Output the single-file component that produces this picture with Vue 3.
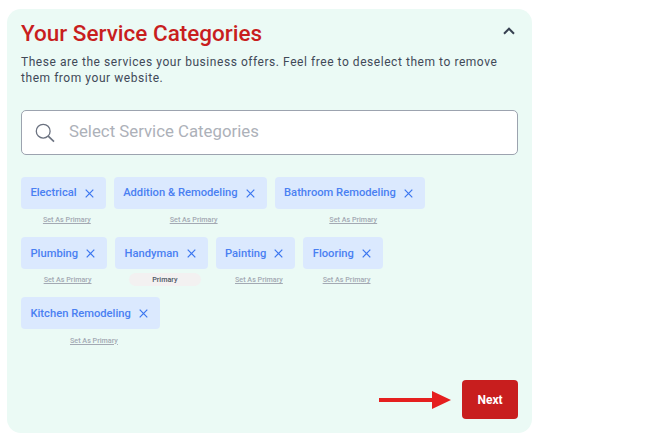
<script setup>
const rows = [
  [
    { name: 'Electrical' },
    { name: 'Addition & Remodeling' },
    { name: 'Bathroom Remodeling' },
  ],
  [
    { name: 'Plumbing' },
    { name: 'Handyman', primary: true },
    { name: 'Painting' },
    { name: 'Flooring' },
  ],
  [{ name: 'Kitchen Remodeling' }],
]
</script>

<template>
  <div class="page">
    <section class="card">
      <header class="head">
        <h1 class="title">Your Service Categories</h1>
        <svg class="chev" width="12" height="8" viewBox="0 0 12 8">
          <path d="M1 6.7 L6 1.7 L11 6.7" fill="none" stroke="#374151" stroke-width="2" />
        </svg>
      </header>
      <p class="desc">These are the services your business offers. Feel free to deselect them to remove them from your website.</p>
      <div class="search">
        <svg class="glass" width="20" height="20" viewBox="0 0 20 20">
          <circle cx="8.2" cy="8.2" r="6.9" fill="none" stroke="#6b7280" stroke-width="1.3" />
          <path d="M13.2 13.2 L19 18.6" fill="none" stroke="#6b7280" stroke-width="1.7" />
        </svg>
        <span class="placeholder">Select Service Categories</span>
      </div>
      <div class="rows">
        <div v-for="(row, i) in rows" :key="i" class="row">
          <div v-for="c in row" :key="c.name" class="item">
            <div class="chip">
              <span class="chip-name">{{ c.name }}</span>
              <svg class="x" width="9" height="9" viewBox="0 0 9 9">
                <path d="M.7 .7 L8.3 8.3 M8.3 .7 L.7 8.3" fill="none" stroke="#3b76f0" stroke-width="1.2" />
              </svg>
            </div>
            <span v-if="c.primary" class="primary">Primary</span>
            <a v-else class="set">Set As Primary</a>
          </div>
        </div>
      </div>
      <footer class="foot">
        <svg class="arrow" width="72" height="18" viewBox="0 0 72 18">
          <path d="M0 7 H53 V0 L72 9 L53 18 V11 H0 Z" fill="#e51f1f" />
        </svg>
        <button class="next">Next</button>
      </footer>
    </section>
  </div>
</template>

<style scoped>
.page {
  width: 665px;
  height: 436px;
  box-sizing: border-box;
  padding: 9px 0 3px 7px;
  background: #fff;
  font-family: Roboto, "Liberation Sans", sans-serif;
}
.card {
  width: 525px;
  height: 424px;
  box-sizing: border-box;
  padding: 10px 14px 14px;
  background: #ebfaf5;
  border-radius: 14px;
  display: flex;
  flex-direction: column;
}
.head {
  display: flex;
  align-items: center;
  justify-content: space-between;
  height: 28px;
}
.title {
  margin: 0;
  font-size: 22.5px;
  line-height: 28px;
  font-weight: 500;
  color: #c81e1e;
}
.chev {
  margin-right: 3px;
  margin-top: -4px;
}
.desc {
  margin: 7px 0 0;
  width: 490px;
  font-size: 12px;
  line-height: 16px;
  letter-spacing: .55px;
  color: #414958;
}
.search {
  margin-top: 24px;
  height: 45px;
  box-sizing: border-box;
  display: flex;
  align-items: center;
  padding-left: 13px;
  background: #fff;
  border: 1px solid #9ca3af;
  border-radius: 5px;
}
.glass {
  flex: none;
}
.placeholder {
  margin-left: 14px;
  padding-bottom: 3px;
  font-size: 16.8px;
  color: #adb1b9;
}
.rows {
  margin-top: 21.7px;
  display: flex;
  flex-direction: column;
  gap: 8px;
}
.row {
  display: flex;
  gap: 8px;
}
.item {
  display: flex;
  flex-direction: column;
  align-items: center;
  height: 52.2px;
}
.chip {
  height: 32px;
  box-sizing: border-box;
  display: flex;
  align-items: center;
  gap: 8px;
  padding: 0 12px 0 9.45px;
  background: #dbe9fe;
  border-radius: 4px;
}
.chip-name {
  padding-top: .4px;
  font-size: 11.2px;
  font-weight: 500;
  color: #4a80f2;
}
.x {
  margin-top: 1px;
}
.set {
  margin-top: 6.5px;
  margin-left: 7px;
  font-size: 7.2px;
  line-height: 9px;
  font-weight: 500;
  color: #a3a9b3;
  text-decoration: underline;
}
.primary {
  margin-top: 4px;
  margin-left: 7px;
  width: 72px;
  height: 13px;
  line-height: 13px;
  text-align: center;
  border-radius: 7px;
  background: #f3f1f1;
  font-size: 7.2px;
  font-weight: 500;
  color: #4b5563;
}
.foot {
  margin-top: auto;
  display: flex;
  justify-content: flex-end;
  align-items: center;
  gap: 11px;
}
.next {
  width: 56px;
  height: 39px;
  border: 0;
  border-radius: 4px;
  background: #c81e1e;
  color: #fff;
  font-family: inherit;
  font-size: 12px;
  font-weight: 700;
}
</style>
